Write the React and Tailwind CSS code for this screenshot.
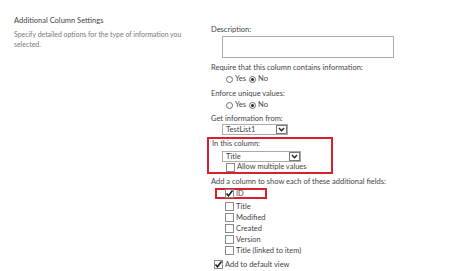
import React from 'react';

const font = { fontFamily: 'Lato, "Open Sans", sans-serif' };

function Radio({ checked }) {
  return (
    <span className="inline-flex w-[7px] h-[7px] rounded-full border border-[#6d6d6d] bg-white items-center justify-center">
      {checked && <span className="w-[3px] h-[3px] rounded-full bg-[#222]" />}
    </span>
  );
}

function Check({ checked }) {
  return (
    <span className="relative inline-block w-[9px] h-[9px] border border-[#8a8a8a] bg-white shrink-0">
      {checked && (
        <svg viewBox="0 0 9 9" className="absolute left-[-1px] top-[-1px] w-[9px] h-[9px]">
          <path d="M1.5 4.5 L3.5 6.8 L7.5 1.5" fill="none" stroke="#222" strokeWidth="1.6" />
        </svg>
      )}
    </span>
  );
}

function Select({ value, width }) {
  return (
    <div className={`flex items-center h-[11px] border border-[#ababab] bg-white ${width}`}>
      <span className="flex-1 pl-[3px] text-[7.5px] leading-none text-[#444]">{value}</span>
      <span className="flex items-center justify-center w-[11px] h-[9px] border border-[#777] bg-white">
        <svg viewBox="0 0 8 6" className="w-[7px] h-[5px]">
          <path d="M1 1.2 L4 4.5 L7 1.2" fill="none" stroke="#222" strokeWidth="1.7" />
        </svg>
      </span>
    </div>
  );
}

function CheckRow({ label, checked }) {
  return (
    <div className="flex items-center h-[11px] gap-[2px]">
      <Check checked={checked} />
      <span className="text-[7.5px] leading-none text-[#444]">{label}</span>
    </div>
  );
}

function YesNo() {
  return (
    <div className="flex items-center gap-[2px] h-[10px] mt-[1px] pl-[29px]">
      <Radio /><span className="mr-[1px]">Yes</span><Radio checked /><span>No</span>
    </div>
  );
}

export default function App() {
  return (
    <div className="flex w-[474px] h-[271px] bg-white overflow-hidden" style={font}>
      <div className="w-[197px] pl-[14px] pt-[15px]">
        <p className="text-[7.5px] leading-[11px] text-[#444]">Additional Column Settings</p>
        <p className="mt-[3px] text-[6.9px] leading-[10px] text-[#777] w-[172px]">
          Specify detailed options for the type of information you selected.
        </p>
      </div>

      <div className="flex flex-col pt-[25px] text-[7.5px] text-[#444]">
        <p className="leading-[10px] pl-[14px]">Description:</p>
        <div className="ml-[25px] mt-[1px] w-[172px] h-[22px] border border-[#ababab] bg-white" />
        <p className="leading-[10px] mt-[5px] pl-[14px]">Require that this column contains information:</p>
        <YesNo />
        <p className="leading-[10px] mt-[5px] pl-[14px]">Enforce unique values:</p>
        <YesNo />
        <p className="leading-[10px] mt-[4px] pl-[14px]">Get information from:</p>
        <div className="pl-[25px]">
          <Select value="TestList1" width="w-[66px]" />
        </div>

        <div className="mt-[2px] ml-[10px] w-[126px] h-[37px] border-2 border-[#d5222e] pl-[3px]">
          <p className="leading-[10px]">In this column:</p>
          <div className="pl-[10px] mt-[2px]">
            <Select value="Title" width="w-[79px]" />
          </div>
          <div className="pl-[14px]">
            <div className="flex items-center h-[10px] gap-[2px]">
              <Check />
              <span className="leading-none">Allow multiple values</span>
            </div>
          </div>
        </div>

        <p className="leading-[10px] mt-[3px] pl-[14px]">Add a column to show each of these additional fields:</p>
        <div className="ml-[18px] mt-[1px] w-[52px] h-[11px] border-2 border-[#d5222e] pl-[8px] flex items-center">
          <CheckRow label="ID" checked />
        </div>
        <div className="flex flex-col pl-[28px] mt-[2px]">
          <CheckRow label="Title" />
          <CheckRow label="Modified" />
          <CheckRow label="Created" />
          <CheckRow label="Version" />
          <CheckRow label="Title (linked to item)" />
        </div>
        <div className="pl-[17px] mt-[3px]">
          <CheckRow label="Add to default view" checked />
        </div>
      </div>
    </div>
  );
}
